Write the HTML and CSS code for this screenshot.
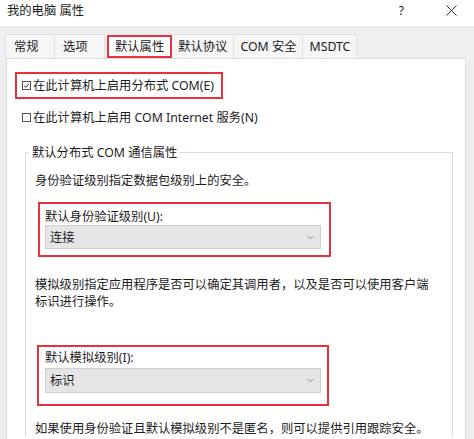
FILE: index.html
```html
<!DOCTYPE html>
<html lang="zh-CN">
<head>
    <meta charset="UTF-8">
    <title>我的电脑 属性</title>
    <link rel="stylesheet" href="styles.css">
</head>
<body>
    <div class="titlebar">
        <span class="title">我的电脑 属性</span>
        <span class="help">?</span>
        <svg class="close" width="11" height="11" viewBox="0 0 11 11">
            <path d="M0.5 0.5 L10.5 10.5 M10.5 0.5 L0.5 10.5" stroke="#333" stroke-width="1" fill="none"/>
        </svg>
    </div>

    <div class="tabs">
        <div class="tab tab-wide">常规</div>
        <div class="tab tab-wide">选项</div>
        <div class="tab active">默认属性</div>
        <div class="tab">默认协议</div>
        <div class="tab">COM 安全</div>
        <div class="tab">MSDTC</div>
    </div>

    <div class="panel">
        <div class="check check-red">
            <svg class="box" width="9" height="9" viewBox="0 0 9 9">
                <rect x="0.5" y="0.5" width="8" height="8" fill="#fff" stroke="#555"/>
                <path d="M2 4.6 L3.8 6.3 L7 2.6" stroke="#333" stroke-width="1" fill="none"/>
            </svg>
            <span>在此计算机上启用分布式 COM(E)</span>
        </div>

        <div class="check check-plain">
            <svg class="box" width="9" height="9" viewBox="0 0 9 9">
                <rect x="0.5" y="0.5" width="8" height="8" fill="#fff" stroke="#555"/>
            </svg>
            <span>在此计算机上启用 COM Internet 服务(N)</span>
        </div>

        <fieldset class="group">
            <legend>默认分布式 COM 通信属性</legend>

            <p class="text">身份验证级别指定数据包级别上的安全。</p>

            <div class="field field-auth">
                <div class="field-label">默认身份验证级别(U):</div>
                <div class="combo">
                    <span>连接</span>
                    <svg width="7" height="5" viewBox="0 0 7 5">
                        <path d="M0.8 1 L3.5 3.8 L6.2 1" stroke="#8a8a8a" stroke-width="1" fill="none"/>
                    </svg>
                </div>
            </div>

            <p class="text text-imp">模拟级别指定应用程序是否可以确定其调用者，以及是否可以使用客户端<br>标识进行操作。</p>

            <div class="field field-imp">
                <div class="field-label">默认模拟级别(I):</div>
                <div class="combo combo-tall">
                    <span>标识</span>
                    <svg width="7" height="5" viewBox="0 0 7 5">
                        <path d="M0.8 1 L3.5 3.8 L6.2 1" stroke="#8a8a8a" stroke-width="1" fill="none"/>
                    </svg>
                </div>
            </div>

            <p class="text text-last">如果使用身份验证且默认模拟级别不是匿名，则可以提供引用跟踪安全。</p>
        </fieldset>
    </div>
</body>
</html>
```

FILE: styles.css
```css
html, body {
    margin: 0;
    padding: 0;
}
body {
    width: 474px;
    height: 439px;
    overflow: hidden;
    background-color: #efefef;
    font-family: "Noto Sans", "Noto Sans CJK SC", sans-serif;
    font-size: 12.3px;
    line-height: 17px;
    color: #1c1c1c;
}
.titlebar {
    height: 26px;
    background-color: #fff;
    display: flex;
    align-items: flex-start;
    padding-top: 2px;
    box-sizing: border-box;
}
.title {
    margin-left: 7px;
    flex: 1;
}
.help {
    margin-right: 42px;
    font-size: 12px;
}
.close {
    margin-top: 3px;
    margin-right: 17px;
}
.tabs {
    display: flex;
    margin: 8px 0 0 5px;
    height: 24px;
}
.tab {
    padding: 0 6px;
    border: 1px solid #e0e0e0;
    border-bottom: none;
    border-left: none;
    background-color: #f6f6f6;
    line-height: 23px;
    box-sizing: border-box;
    height: 24px;
}
.tab-wide {
    width: 50px;
    padding-left: 8px;
}
.tab:first-child {
    border-left: 1px solid #e0e0e0;
}
.tab.active {
    background-color: #fff;
    border: 2px solid #e5323e;
    height: 23px;
    margin: 1px 0 0 2px;
    line-height: 19px;
    padding: 0 6px;
}
.panel {
    margin: 0 8px 0 6px;
    height: 381px;
    background-color: #fff;
    border: 1px solid #dcdcdc;
    border-bottom: none;
    padding-top: 13px;
    box-sizing: border-box;
}
.check {
    display: flex;
    align-items: center;
    gap: 2px;
}
.check-red {
    margin-left: 8px;
    width: 208px;
    height: 27px;
    border: 2px solid #e5323e;
    padding-left: 5px;
    box-sizing: border-box;
}
.check-plain {
    margin: 10px 0 0 15px;
}
.group {
    margin: 18px 12px 0 18px;
    padding: 11px 9px 0 9px;
    border: 1px solid #dcdcdc;
    border-bottom: none;
    min-width: 0;
}
.group legend {
    padding: 0 3px;
    margin-left: -6px;
}
.text {
    margin: 0;
}
.field {
    border: 2px solid #e5323e;
    box-sizing: border-box;
}
.field-auth {
    margin: 13px 0 0 3px;
    width: 293px;
    height: 55px;
    padding: 4px 0 0 5px;
}
.field-imp {
    margin: 35px 0 0 2px;
    width: 292px;
    height: 61px;
    padding: 2px 0 0 6px;
}
.combo {
    width: 276px;
    height: 24px;
    background-color: #e5e5e5;
    border: 1px solid #cfcfcf;
    box-sizing: border-box;
    display: flex;
    align-items: center;
    justify-content: space-between;
    padding: 0 6px 0 4px;
}
.combo-tall {
    height: 25px;
    margin-top: 2px;
}
.text-imp {
    margin-top: 19px;
}
.text-last {
    margin-top: 14px;
}
```
